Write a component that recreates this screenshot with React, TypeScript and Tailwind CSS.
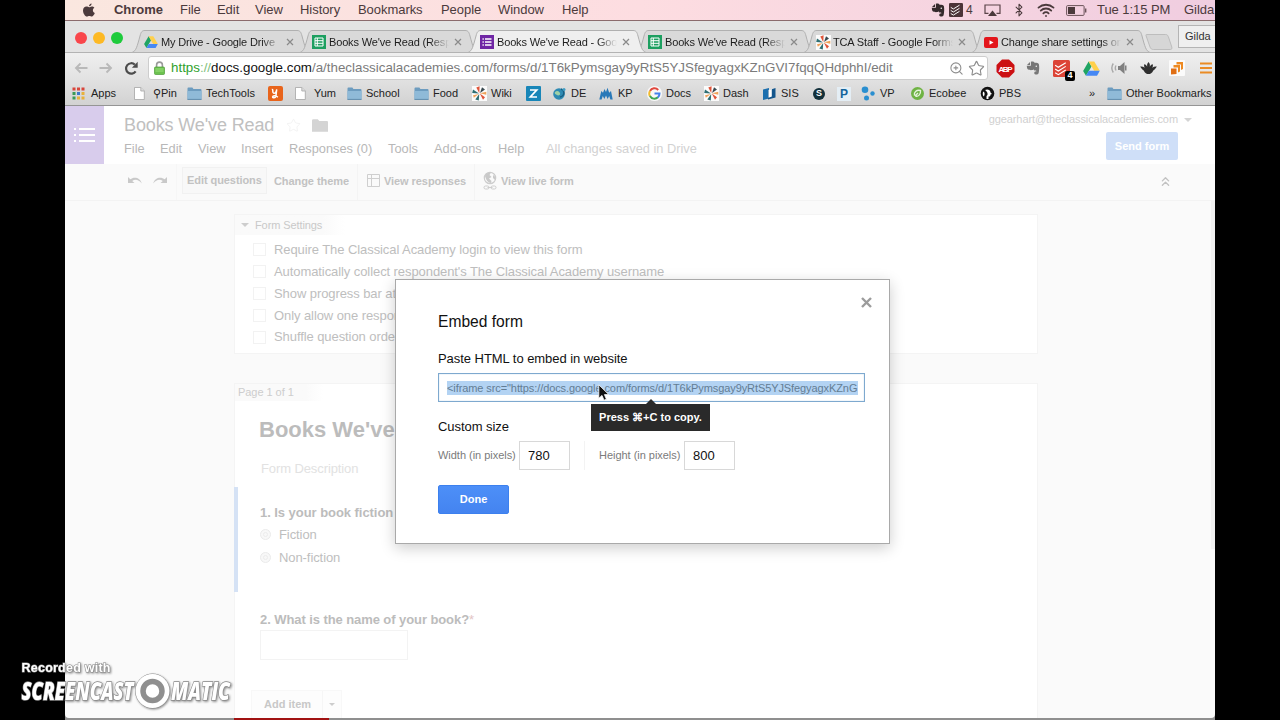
import type { ReactNode } from "react";
import { Bluetooth, ChevronsUp, Star, Wifi, ZoomIn } from "lucide-react";
import clsx from "clsx";

/* ---------- icons ---------- */

const AppleLogo = () => (
  <svg width="14" height="15" viewBox="0 0 14 15" fill="#4b3a3c">
    <path d="M9.6 0.4c.1 1.2-1.2 2.9-2.6 2.9C6.800 2 8.200.6 9.600.4zM7.100 4.200c.6 0 1.400-.8 2.700-.8 1.100 0 2 .5 2.600 1.300-2.200 1.300-1.900 4.200.4 5.200-.5 1.400-1.800 3.700-3.100 3.700-.9 0-1.300-.5-2.400-.5s-1.500.5-2.400.5C3.200 13.600 1 10.300 1 7.500 1 4.900 2.700 3.500 4.500 3.500c1.100 0 2 .7 2.600.7z" />
  </svg>
);

const Evernote = ({ color, size = 14 }: { color: string; size?: number }) => (
  <svg width={size} height={size} viewBox="0 0 14 14">
    <path fill={color} d="M1 3.900 4 1v2.900zM4.900.8C6.500.3 8 .7 8.600 1.700c2.400.1 3.900.4 4.300 1.500.5 2 .4 6.500-.3 9.100-.5 1.600-4 1.700-4.300.1-.2-1.600.6-2.300 2.300-2.200-.2-.9-1.700-.4-2.600-.9L7.600 8.300C6.500 9.700 3 9.300 1.700 8.300 1 7.500.9 5.800.8 4.700h4.100z" />
    <circle cx="10.300" cy="5.200" r=".8" fill="#eee" />
  </svg>
);

const Todoist = ({ color, size = 14 }: { color: string; size?: number }) => (
  <svg width={size} height={size} viewBox="0 0 16 16" fill="none" stroke="#fff" strokeWidth="1.100">
    <rect width="16" height="16" rx="1.500" fill={color} stroke="none" />
    <path d="m2 5 3 1.800L12 2.500M2 8.500l3 1.800L12 6M2 12l3 1.800 7-4.300" />
  </svg>
);

const Airplay = () => (
  <svg width="17" height="13" viewBox="0 0 17 13" fill="none" stroke="#5b4449" strokeWidth="1.200">
    <path d="M4.500 9.400H1V1h15v8.400h-3.500" />
    <path d="M8.500 6.500 13 12H4z" fill="#4b3a3c" stroke="none" />
  </svg>
);

const Battery = () => (
  <svg width="21" height="11" viewBox="0 0 21 11">
    <rect x=".6" y=".6" width="17.500" height="9.800" rx="1" fill="none" stroke="#6b5359" />
    <rect x="2" y="2" width="7" height="7" fill="#4b3a3c" />
    <path d="M19 3.500h1.400v4H19z" fill="#6b5359" />
  </svg>
);

const Drive = ({ size = 14 }: { size?: number }) => (
  <svg width={size} height={size} viewBox="0 0 16 16">
    <path fill="#1fa463" d="M5.300 1.500 8 6.100 2.800 14.800.1 10.300z" />
    <path fill="#ffd04b" d="M5.300 1.500h5.300l5.200 8.700h-5.300z" />
    <path fill="#4688f4" d="M5.400 10.200h10.400l-2.600 4.600H2.800z" />
  </svg>
);

const SheetIcon = ({ color }: { color: string }) => (
  <svg width="14" height="14" viewBox="0 0 14 14">
    <rect width="14" height="14" fill={color} />
    <path fill="none" stroke="#fff" d="M3 3h8v8H3zM5.300 3v8M3 5.700h8M3 8.300h8" />
  </svg>
);

const FormsIcon = () => (
  <svg width="14" height="14" viewBox="0 0 14 14">
    <rect width="14" height="14" fill="#6f26a4" />
    <path fill="none" stroke="#fff" strokeWidth="1.300" d="M2.500 4h1.300M5 4h6.500M2.500 7h1.300M5 7h6.500M2.500 10h1.300M5 10h6.500" />
  </svg>
);

const Pinwheel = () => (
  <svg width="15" height="15" viewBox="0 0 15 15">
    <rect width="15" height="15" fill="#fbfbfb" />
    <path fill="#e0553a" d="M7.300 7.200 4.300 1.600 7.600.3zM7.800 7.600l5.200 3.600-2 2.600z" />
    <path fill="#2f6f73" d="M7 7.500 1 3.600.2 6.900zM7.200 8l-.4 6.500-3.500-1z" />
    <path fill="#f0a35b" d="m7.800 7.300 6.500-1.500v3zM6.800 8l-5 3.800-.8-2.600z" />
    <path fill="#3a4a50" d="m8 7 2-5.800 3 2.200z" />
  </svg>
);

const YouTube = () => (
  <svg width="14" height="11" viewBox="0 0 14 11">
    <rect width="14" height="11" rx="2" fill="#e3151b" />
    <path fill="#fff" d="m5.500 3.200 4 2.300-4 2.300z" />
  </svg>
);

const AppsGrid = () => (
  <svg width="13" height="13" viewBox="0 0 13 13">
    <path fill="#d8453a" d="M.5.5h3v3h-3zM5 .5h3v3H5zM9.500.5h3v3h-3z" />
    <path fill="#3b9a56" d="M.5 5h3v3h-3zM.5 9.500h3v3h-3z" />
    <path fill="#3f78c9" d="M5 5h3v3H5z" />
    <path fill="#e8b13a" d="M9.500 5h3v3h-3zM5 9.500h3v3H5zM9.500 9.500h3v3h-3z" />
  </svg>
);

const PageIcon = () => (
  <svg width="11" height="13" viewBox="0 0 11 13">
    <path fill="#fff" stroke="#a5a5a5" strokeWidth=".8" d="M.5.5h6.300l3.500 3.500v8.500H.5z" />
    <path fill="#ddd" stroke="#a5a5a5" strokeWidth=".8" d="M6.800.5V4h3.500" />
  </svg>
);

const FolderIcon = () => (
  <svg width="15" height="13" viewBox="0 0 15 13">
    <path fill="#6d9cbf" d="M.5 1.500Q.5.600 1.400.6h4l1 1.400h7.200q.9 0 .9.900v9.500H.5z" />
    <path fill="#8fbad8" d="M.5 4h14v8.400H.5z" />
    <path stroke="#5683a4" strokeWidth=".8" d="M.5 12.400h14" />
  </svg>
);

const YummlyIcon = () => (
  <svg width="15" height="15" viewBox="0 0 15 15">
    <rect width="15" height="15" rx="2" fill="#e8641b" />
    <path fill="none" stroke="#fff" strokeWidth="1.500" d="M3.800 3.400c2-.3 0 3.700 2 3.900s2.600-2 2.900-4L8 9.500c-.4 3-3.500 2.800-3.400 1.300.2-1.400 3.400-1.500 5.200.4" />
  </svg>
);

const ZIcon = () => (
  <svg width="15" height="15" viewBox="0 0 15 15">
    <rect width="15" height="15" rx="1" fill="#1886b8" />
    <path fill="none" stroke="#fff" strokeWidth="1.700" d="M4 4h6.700L4.300 11H11" />
  </svg>
);

const GlobeSwirl = () => (
  <svg width="15" height="15" viewBox="0 0 15 15">
    <circle cx="7" cy="8" r="5.800" fill="#2d8ab3" />
    <path fill="#9ed0a6" d="M3 6c2-2 4-1 5 1s-2 3-3 2-3-1-2-3z" />
    <path fill="none" stroke="#195f82" strokeWidth="1.500" d="M9 3c4 1 4 7-1 8" />
    <circle cx="12" cy="3.600" r="1.500" fill="#3f9dc4" />
  </svg>
);

const KpIcon = () => (
  <svg width="14" height="13" viewBox="0 0 14 13" fill="#2a79b8">
    <path d="M.3 12.500 2.300 4 4 5.800 5.500 2l1.500 3L8.500.800l1.700 5L12 4l1.700 8.500h-2.300L10.200 9 8.600 12 7 8.500 5.400 12 3.800 9l-1.200 3.500z" />
  </svg>
);

const GoogleG = () => (
  <svg width="15" height="15" viewBox="0 0 15 15">
    <rect width="15" height="15" rx="7" fill="#f8f8f8" />
    <g fill="none" strokeWidth="2">
      <path stroke="#e0483e" d="M3 5A5 5 0 0 1 11.200 4" />
      <path stroke="#f2bb2e" d="M3 4.900a5.200 5.200 0 0 0 0 5.300" />
      <path stroke="#3da653" d="M3 10a5 5 0 0 0 7.900 1.300" />
      <path stroke="#4381ec" d="M7.500 7.500h5a5 5 0 0 1-1.700 3.900" />
    </g>
  </svg>
);

const SisIcon = () => (
  <svg width="15" height="14" viewBox="0 0 15 14">
    <path fill="#1d6fae" d="M1 2.500 7 1v10.500L1 13z" />
    <path fill="#14568c" d="M6 3.500 13.500 1v9.500L6 12.500z" />
    <path fill="#fff" d="m6.500 3 3.300-1v7.500l-3.300 1.300z" />
  </svg>
);

const VpIcon = () => (
  <svg width="15" height="15" viewBox="0 0 15 15" fill="#2a8fd0">
    <circle cx="4" cy="3.800" r="3.300" />
    <circle cx="11.500" cy="7.500" r="2.200" />
    <circle cx="5.500" cy="12" r="2.500" />
  </svg>
);

const EcobeeIcon = () => (
  <svg width="15" height="15" viewBox="0 0 15 15">
    <circle cx="7.500" cy="7.500" r="6.500" fill="#6fb344" />
    <path fill="none" stroke="#e4f2da" strokeWidth="1.400" d="M4.500 9.500c-1-3 2-6 6-5 .5 4-2.500 6.500-5 5.500M5 10l3-3" />
  </svg>
);

const PbsIcon = () => (
  <svg width="15" height="15" viewBox="0 0 15 15">
    <circle cx="7.500" cy="7.500" r="6.800" fill="#111" />
    <path fill="#fff" d="M5 4c2.500-1.400 5.500 0 5.500 2.500L12 8l-1.500.5c0 1.500-.5 2-2 2V13H6.500V10c1.800-1 1.500-4-1.500-6z" />
    <path fill="#fff" d="M3.200 5.500c1.800.7 2 3.500.3 5-.9-1.600-1-3.400-.3-5z" />
  </svg>
);

const Lock = () => (
  <svg width="11" height="14" viewBox="0 0 11 14">
    <path fill="none" stroke="#9a9a9a" strokeWidth="1.600" d="M2.600 7V4a2.900 2.900 0 0 1 5.800 0v3" />
    <rect x=".5" y="6" width="10" height="7.500" rx="1" fill="#6cc24f" stroke="#4c9c38" strokeWidth=".7" />
    <path stroke="#9be07f" d="M1.500 8h8M1.500 10h8" />
  </svg>
);

const NavArrow = ({ flip }: { flip?: boolean }) => (
  <svg width="15" height="12" viewBox="0 0 15 12" className={clsx(flip && "-scale-x-100")}>
    <path fill="none" stroke="#b9b9b9" strokeWidth="1.900" d="M13.500 6H2.500M6.500 1.500 2 6l4.500 4.500" />
  </svg>
);

const Reload = () => (
  <svg width="15" height="15" viewBox="0 0 15 15">
    <path fill="none" stroke="#4c4c4c" strokeWidth="2.200" d="M11.600 10.300A5.200 5.200 0 1 1 10.800 3.600" />
    <path fill="#4c4c4c" d="M13.700.8v5.900H7.900z" />
  </svg>
);

const SoundIcon = () => (
  <svg width="18" height="14" viewBox="0 0 18 14" fill="none" stroke="#a8a8a8" strokeWidth="1.400">
    <path fill="#808080" stroke="none" d="M8 5h2l4.500-4v12L10 9H8zM15 4.500h1.500v5H15z" />
    <path d="M6 4.500Q4.600 7 6 9.500M3.300 2.500Q.3 7 3.300 11.500" />
  </svg>
);

const Lotus = () => (
  <svg width="17" height="13" viewBox="0 0 17 13" fill="#2f2f2f">
    <path d="M8.500 0C10 1.500 10 3 9.800 4.800c.8-1.700 1.500-2.300 3-2.600.3 1.400 0 2.600-.5 3.600 1.300-1 2.700-1.400 4.500-1.200-1 2-2 3-3.500 3.800C12 11 10.500 12 8.500 12s-3.500-1-4.800-3.600C2.200 7.600 1.200 6.600.2 4.600 2 4.400 3.400 4.800 4.700 5.800 4.200 4.800 3.900 3.600 4.200 2.200c1.500.3 2.200.9 3 2.600C7 3 7 1.500 8.500 0z" />
  </svg>
);

const OrangeStack = () => (
  <svg width="16" height="16" viewBox="0 0 16 16">
    <rect width="16" height="16" rx="1" fill="#fbfbfb" />
    <path fill="#ee8a22" d="M7.500 2H14v7l-2 1V4.500H7.500z" />
    <path fill="#ee8a22" d="M4.500 5H11v6.500l-2 1v-5H4.500z" />
    <path fill="#e06f15" d="M2 8.500h5.500V14L2 14.500z" />
  </svg>
);

const Undo = ({ flip }: { flip?: boolean }) => (
  <svg width="16" height="9" viewBox="0 0 16 9" className={clsx(flip && "-scale-x-100")}>
    <path fill="#c9c9c9" d="M1 1v6h6.500L5.200 5C8 3 11.500 3.200 14.800 7.500 13.500 1.500 7 .200 3.300 3.200z" />
  </svg>
);

const GlobeLink = () => (
  <svg width="14" height="20" viewBox="0 0 14 20" fill="none" stroke="#cdcdcd">
    <circle cx="7" cy="7" r="5.700" strokeWidth="1.200" />
    <path fill="#c9c9c9" stroke="none" d="M2 5c1-3 4-4 6-3.500L6.500 4l2 2-2.500 1.500L8.500 10 8 12C5 12 3 9 2 5zM10 4l2.500 2-.5 3-2-2z" />
    <rect x="1" y="15" width="5" height="3" rx="1.500" />
    <rect x="8" y="15" width="5" height="3" rx="1.500" />
    <path d="M4.500 16.500h5" />
  </svg>
);

const Cursor = () => (
  <svg width="12" height="18" viewBox="0 0 12 18">
    <path fill="#111" stroke="#fff" strokeWidth=".8" d="M.8.8v13.500l3.200-2.900 2 4.800 2.400-1-2-4.600h4.400z" />
  </svg>
);

/* ---------- mac menu bar ---------- */

const menus = [
  { label: "File", w: "w-[37px]" },
  { label: "Edit", w: "w-[38px]" },
  { label: "View", w: "w-[45px]" },
  { label: "History", w: "w-[58px]" },
  { label: "Bookmarks", w: "w-[83px]" },
  { label: "People", w: "w-[57px]" },
  { label: "Window", w: "w-[64px]" },
  { label: "Help", w: "w-[60px]" },
];

function MenuBar() {
  return (
    <div className="flex h-[21px] shrink-0 items-center border-b border-[#8b6b6d] bg-gradient-to-r from-[#fae7df] via-[#fddde1] to-[#f0cde0] pl-[17px] text-[13px] tracking-[-0.05px] text-[#4b3a3c]">
      <div className="w-[32px]"><AppleLogo /></div>
      <div className="w-[66px] font-bold">Chrome</div>
      {menus.map((m) => (
        <div key={m.label} className={m.w}>{m.label}</div>
      ))}
      <div className="ml-auto flex h-full items-center">
        <div className="w-[18px]"><Evernote color="#35292b" /></div>
        <div className="w-[17px]"><Todoist color="#4b3337" /></div>
        <div className="w-[18px] text-[12px]">4</div>
        <div className="w-[28px]"><Airplay /></div>
        <div className="w-[25px]"><Bluetooth size={14} strokeWidth={1.800} /></div>
        <div className="w-[29px]"><Wifi size={18} strokeWidth={2.400} /></div>
        <div className="w-[31px]"><Battery /></div>
        <div className="w-[87px] whitespace-nowrap">Tue 1:15 PM</div>
        <div className="w-[31px] overflow-hidden font-medium">Gilda</div>
      </div>
    </div>
  );
}

/* ---------- browser chrome ---------- */

function Tab({ icon, title, active }: { icon: ReactNode; title: string; active?: boolean }) {
  return (
    <div className={clsx("-mr-3 grid h-[22px] w-[180px] shrink-0", active && "z-10")}>
      <svg width="180" height="22" viewBox="0 0 180 22" className="col-start-1 row-start-1">
        <path
          d="M.5 22C4 21 5 17 8 6 9 2 10 .500 13 .500h152c3 0 4 1.500 5 5.500 3 11 4 15 7.500 16"
          fill={active ? "#efefef" : "#d9d9d9"}
          stroke="#b0b0b0"
        />
      </svg>
      <div className="col-start-1 row-start-1 flex items-center pl-[12px] pt-[2px]">
        <div className="flex w-[17px] items-center">{icon}</div>
        <div className="w-[120px] overflow-hidden whitespace-nowrap text-[11px] tracking-[-0.15px] text-[#1d1d1d] [mask-image:linear-gradient(to_right,black_84%,transparent)]">
          {title}
        </div>
        <svg width="8" height="8" viewBox="0 0 8 8" className="ml-[5px]" stroke="#8a8a8a" strokeWidth="1.200">
          <path d="m1 1 6 6M7 1 1 7" />
        </svg>
      </div>
    </div>
  );
}

function TabStrip() {
  return (
    <div className="flex h-[32px] shrink-0 items-end border-b border-[#b3b3b3] bg-[#e3e3e3]">
      <div className="flex h-[29px] w-[67px] shrink-0 items-center gap-[6px] pl-[10px]">
        <span className="size-[12px] rounded-full bg-[#f9464b]" />
        <span className="size-[12px] rounded-full bg-[#fdb924]" />
        <span className="size-[12px] rounded-full bg-[#1ecb3c]" />
      </div>
      <Tab icon={<Drive />} title="My Drive - Google Drive" />
      <Tab icon={<SheetIcon color="#1d9f60" />} title="Books We've Read (Resp" />
      <Tab icon={<FormsIcon />} title="Books We've Read - Goog" active />
      <Tab icon={<SheetIcon color="#1d9f60" />} title="Books We've Read (Resp" />
      <Tab icon={<Pinwheel />} title="TCA Staff - Google Forms" />
      <Tab icon={<YouTube />} title="Change share settings on" />
      <svg width="28" height="16" viewBox="0 0 28 16" className="mb-[2px] ml-[5px] shrink-0">
        <path d="M1.500.5h19c2 0 2.500 1 3.300 3.500l3 9c.4 1.500 0 2.500-1.500 2.500H8.500c-2 0-3-1-3.500-2.500L1.500 3C1 1.500.5.500 1.500.500z" fill="#d6d6d6" stroke="#bdbdbd" />
      </svg>
      <div className="mb-[4px] ml-auto flex h-[23px] w-[37px] shrink-0 items-center overflow-hidden border border-r-0 border-[#b4b4b4] bg-[#efefef] pl-[6px] text-[11px] text-[#333]">
        Gilda
      </div>
    </div>
  );
}

function AddressRow() {
  return (
    <div className="flex h-[27px] shrink-0 items-center bg-gradient-to-b from-[#efefef] to-[#e2e2e2] pl-[9px] pt-[3px]">
      <div className="w-[24px]"><NavArrow /></div>
      <div className="w-[26px]"><NavArrow flip /></div>
      <div className="w-[24px]"><Reload /></div>
      <div className="flex h-[24px] w-[840px] shrink-0 items-center rounded-[3px] border border-[#cdcdcd] bg-white pl-[5px]">
        <div className="w-[17px]"><Lock /></div>
        <div className="w-[778px] whitespace-nowrap pt-px text-[13.350px] text-[#7b7b7b]">
          <span className="text-[#2fa12c]">https</span>
          <span className="text-[#7fc17d]">://</span>
          <span className="text-[#111]">docs.google.com</span>
          /a/theclassicalacademies.com/forms/d/1T6kPymsgay9yRtS5YJSfegyagxKZnGVI7fqqQHdphhI/edit
        </div>
        <ZoomIn size={15} strokeWidth={1.700} color="#8c8c8c" />
        <Star size={17} strokeWidth={1.600} color="#8c8c8c" className="ml-[4px]" />
      </div>
      <div className="ml-[8px] flex h-full items-center">
        <div className="w-[30px]">
          <svg width="19" height="19" viewBox="0 0 19 19">
            <path fill="#cc1013" d="M6 .500h7L18.500 6v7L13 18.500H6L.500 13V6z" />
            <text x="9.500" y="12.500" textAnchor="middle" fontSize="8" fontWeight="bold" fill="#fff" textLength="14">ABP</text>
          </svg>
        </div>
        <div className="w-[27px]"><Evernote color="#777" size={14} /></div>
        <div className="relative w-[30px]">
          <Todoist color="#dc4437" size={17} />
          <span className="absolute left-[12px] top-[11px] flex h-[10px] w-[10px] items-center justify-center rounded-[2px] bg-black text-[9px] font-bold text-white">4</span>
        </div>
        <div className="w-[27px]"><Drive size={17} /></div>
        <div className="w-[30px]"><SoundIcon /></div>
        <div className="w-[29px]"><Lotus /></div>
        <div className="w-[31px]"><OrangeStack /></div>
        <svg width="12" height="12" viewBox="0 0 12 12" stroke="#ea8b25" strokeWidth="2.200">
          <path d="M0 1.500h12M0 6h12M0 10.500h12" />
        </svg>
      </div>
    </div>
  );
}

const bookmarks: { w: string; icon?: ReactNode; label?: string }[] = [
  { w: "w-[62px]", icon: <AppsGrid />, label: "Apps" },
  { w: "w-[53px]", icon: <PageIcon />, label: "⚲Pin" },
  { w: "w-[81px]", icon: <FolderIcon />, label: "TechTools" },
  { w: "w-[27px]", icon: <YummlyIcon /> },
  { w: "w-[52px]", icon: <PageIcon />, label: "Yum" },
  { w: "w-[67px]", icon: <FolderIcon />, label: "School" },
  { w: "w-[58px]", icon: <FolderIcon />, label: "Food" },
  { w: "w-[54px]", icon: <Pinwheel />, label: "Wiki" },
  { w: "w-[26px]", icon: <ZIcon /> },
  { w: "w-[47px]", icon: <GlobeSwirl />, label: "DE" },
  { w: "w-[48px]", icon: <KpIcon />, label: "KP" },
  { w: "w-[57px]", icon: <GoogleG />, label: "Docs" },
  { w: "w-[58px]", icon: <Pinwheel />, label: "Dash" },
  { w: "w-[51px]", icon: <SisIcon />, label: "SIS" },
  {
    w: "w-[24px]",
    icon: <span className="flex size-[12px] items-center justify-center rounded-full bg-[#12303a] text-[9px] font-bold text-white">S</span>,
  },
  {
    w: "w-[24px]",
    icon: <span className="flex size-[14px] items-center justify-center bg-[#e4eef5] text-[12px] font-bold text-[#12639b]">P</span>,
  },
  { w: "w-[49px]", icon: <VpIcon />, label: "VP" },
  { w: "w-[70px]", icon: <EcobeeIcon />, label: "Ecobee" },
  { w: "w-[109px]", icon: <PbsIcon />, label: "PBS" },
  { w: "w-[18px]", icon: <span>»</span> },
  { w: "w-[105px]", icon: <FolderIcon />, label: "Other Bookmarks" },
];

function BookmarksBar() {
  return (
    <div className="flex h-[26px] shrink-0 items-center overflow-hidden border-b border-[#959595] bg-gradient-to-b from-[#e1e1e1] to-[#d2d2d2] pl-[7px] pt-[2px] text-[11px] text-[#222]">
      {bookmarks.map((b, i) => (
        <div key={i} className={clsx("flex shrink-0 items-center gap-[4px] whitespace-nowrap", b.w)}>
          <div className="flex w-[15px] shrink-0 items-center">{b.icon}</div>
          {b.label}
        </div>
      ))}
    </div>
  );
}

/* ---------- form editor ---------- */

const docMenus = [
  { label: "File", w: "w-[36px]" },
  { label: "Edit", w: "w-[38px]" },
  { label: "View", w: "w-[43px]" },
  { label: "Insert", w: "w-[48px]" },
  { label: "Responses (0)", w: "w-[99px]" },
  { label: "Tools", w: "w-[46px]" },
  { label: "Add-ons", w: "w-[64px]" },
  { label: "Help", w: "w-[48px]" },
];

function EditorHeader() {
  return (
    <div className="flex h-[58px] shrink-0 bg-white">
      <div className="flex w-[39px] items-center justify-center bg-[#d8ccec]">
        <svg width="21" height="16" viewBox="0 0 21 16" stroke="#fff" strokeWidth="1.800">
          <path d="M0 2h2M5 2h16M0 8h2M5 8h16M0 14h2M5 14h16" />
        </svg>
      </div>
      <div className="flex flex-col pl-[20px]">
        <div className="flex h-[36px] items-center pt-[3px]">
          <div className="w-[162px] text-[18px] tracking-[-0.120px] text-[#c0c0c0]">Books We've Read</div>
          <div className="w-[26px]"><Star size={15} strokeWidth={1.300} color="#f0f0f0" /></div>
          <svg width="16" height="13" viewBox="0 0 16 13" fill="#d4d4d4">
            <path d="M0 1.500Q0 .3 1.200.3h4.600L7.300 2H15q1 0 1 1v9.700H0z" />
          </svg>
        </div>
        <div className="flex h-[14px] items-center text-[12.800px] text-[#b8b8b8]">
          {docMenus.map((m) => (
            <div key={m.label} className={clsx("whitespace-nowrap", m.w)}>{m.label}</div>
          ))}
          <div className="whitespace-nowrap text-[#d2d2d2]">All changes saved in Drive</div>
        </div>
      </div>
      <div className="ml-auto flex flex-col pr-[23px]">
        <div className="flex h-[26px] items-center justify-end pt-px text-[11px] tracking-[-0.080px] text-[#d0d0d0]">
          ggearhart@theclassicalacademies.com
          <span className="ml-[6px] border-x-[4px] border-t-[4px] border-x-transparent border-t-[#d4d4d4]" />
        </div>
        <div className="mr-[14px] flex h-[28px] w-[72px] items-center justify-center self-end rounded-[2px] bg-[#cfdff8] text-[11px] font-bold text-white">
          Send form
        </div>
      </div>
    </div>
  );
}

function EditorToolbar() {
  return (
    <div className="flex h-[37px] shrink-0 items-center border-b border-[#f3f3f3] bg-[#fafafa] pl-[62px] text-[11px] font-bold tracking-[-0.070px] text-[#c2c2c2]">
      <div className="w-[25px] pb-[3px]"><Undo /></div>
      <div className="w-[24px] pb-[3px]"><Undo flip /></div>
      <div className="h-full w-[6px] border-l border-[#f6f6f6]" />
      <div className="mb-[3px] flex h-[27px] w-[85px] items-center border border-[#f1f1f1] bg-[#f8f8f8] pl-[4px]">Edit questions</div>
      <div className="w-[90px] pb-[2px] pl-[7px]">Change theme</div>
      <div className="h-full w-[10px] border-l border-[#f4f4f4]" />
      <div className="w-[17px] pb-[3px]">
        <svg width="13" height="13" viewBox="0 0 13 13" fill="none" stroke="#cfcfcf">
          <path d="M.5.5h12v12H.5zM4.500.5v12M.5 4.500h12" />
        </svg>
      </div>
      <div className="w-[90px] pb-[2px]">View responses</div>
      <div className="h-full w-[9px] border-l border-[#f4f4f4]" />
      <div className="w-[18px] pb-[2px]"><GlobeLink /></div>
      <div className="pb-[2px]">View live form</div>
      <ChevronsUp size={15} strokeWidth={2.200} className="mb-[2px] ml-auto mr-[42px]" />
    </div>
  );
}

const settings = [
  "Require The Classical Academy login to view this form",
  "Automatically collect respondent's The Classical Academy username",
  "Show progress bar at the bottom",
  "Only allow one response",
  "Shuffle question order",
];

function FormSettings() {
  return (
    <div className="h-[140px] w-[804px] shrink-0 border border-[#f4f4f4] bg-white">
      <div className="flex h-[20px] w-[110px] items-center bg-gradient-to-r from-[#fafafa] from-80% to-white pl-[6px] text-[11px] text-[#c9c9c9]">
        <span className="border-x-[4px] border-t-[4px] border-x-transparent border-t-[#cdcdcd]" />
        <span className="ml-[6px] tracking-[-0.100px]">Form Settings</span>
      </div>
      <div className="flex flex-col pl-[18px] pt-[4px] text-[13px] tracking-[-0.080px] text-[#bebebe]">
        {settings.map((s) => (
          <div key={s} className="flex h-[21.800px] items-center">
            <span className="mr-[8px] size-[13px] border border-[#f2f2f2]" />
            {s}
          </div>
        ))}
      </div>
    </div>
  );
}

function RadioRow({ label }: { label: string }) {
  return (
    <div className="flex h-[23px] items-center text-[13px] tracking-[-0.080px] text-[#bebebe]">
      <span className="mr-[8px] flex size-[11px] items-center justify-center rounded-full border border-[#ebebeb] bg-[#f8f8f8]">
        <span className="size-[5px] rounded-full border border-[#ececec]" />
      </span>
      {label}
    </div>
  );
}

function FormPage() {
  return (
    <div className="mt-[29px] flex h-[336px] w-[804px] shrink-0 flex-col border border-b-0 border-[#f4f4f4] bg-white">
      <div className="h-[17px] w-[88px] bg-gradient-to-r from-[#fafafa] from-80% to-white pl-[3px] text-[11px] leading-[17px] tracking-[-0.050px] text-[#cdcdcd]">Page 1 of 1</div>
      <div className="h-[56px] pl-[24px] text-[22px] font-bold leading-[58px] text-[#bcbcbc]">Books We've Read</div>
      <div className="h-[30px] pl-[26px] text-[13px] leading-[24px] tracking-[-0.100px] text-[#e2e2e2]">Form Description</div>
      <div className="ml-[-1px] flex h-[105px] flex-col border-l-4 border-[#d5e2f5] pl-[22px] pt-[15px]">
        <div className="h-[21px] text-[13px] font-bold leading-[22px] tracking-[-0.050px] text-[#bcbcbc]">1. Is your book fiction or non-fiction?</div>
        <RadioRow label="Fiction" />
        <RadioRow label="Non-fiction" />
      </div>
      <div className="flex h-[38px] items-end pb-px pl-[25px] text-[13px] font-bold tracking-[-0.080px] text-[#bcbcbc]">
        2. What is the name of your book?<span className="font-normal text-[#e3c4c4]">*</span>
      </div>
      <div className="ml-[25px] h-[30px] w-[148px] border border-[#f3f3f3]" />
      <div className="ml-[16px] mt-[30px] flex h-[29px] w-[91px] items-center border border-[#f8f8f8] bg-[#fdfdfd] pl-[12px] text-[11px] font-bold text-[#c8c8c8]">
        Add item
        <span className="ml-auto flex h-full w-[19px] items-center justify-center border-l border-[#f6f6f6]">
          <span className="border-x-[3px] border-t-[3px] border-x-transparent border-t-[#cdcdcd]" />
        </span>
      </div>
    </div>
  );
}

function EmbedDialog() {
  return (
    <div className="absolute left-[330px] top-[173px] flex h-[265px] w-[495px] flex-col border border-[#a9a9a9] bg-white pl-[42px] shadow-[0_4px_14px_rgba(0,0,0,0.2)]">
      <svg width="11" height="11" viewBox="0 0 11 11" className="absolute right-[17px] top-[17px]" stroke="#9c9c9c" strokeWidth="2.400">
        <path d="m1 1 9 9M10 1 1 10" />
      </svg>
      <div className="mt-[30px] h-[24px] text-[15.600px] leading-[24px] text-[#111]">Embed form</div>
      <div className="mt-[15px] h-[20px] text-[13px] leading-[20px] tracking-[-0.050px] text-[#111]">Paste HTML to embed in website</div>
      <div className="mt-[4px] flex h-[29px] w-[427px] items-center border border-[#7ea9cf] pl-[8px] shadow-[inset_0_0_1px_#7ea9cf]">
        <span className="w-[411px] overflow-hidden whitespace-nowrap bg-[#b3d3f3] text-[11px] leading-[14px] tracking-[-0.090px] text-[#637d94]">
          {'<iframe src="https://docs.google.com/forms/d/1T6kPymsgay9yRtS5YJSfegyagxKZnG'}
        </span>
      </div>
      <div className="mt-[15px] h-[20px] text-[13px] leading-[20px] tracking-[-0.050px] text-[#111]">Custom size</div>
      <div className="mt-[4px] flex h-[29px] items-center text-[11px] tracking-[-0.030px] text-[#7b7b7b]">
        <span className="w-[81px]">Width (in pixels)</span>
        <span className="flex h-full w-[51px] items-center border border-[#d8d8d8] pl-[8px] text-[13px] text-[#111]">780</span>
        <span className="ml-[14px] h-full w-[15px] border-l border-[#f3f3f3]" />
        <span className="w-[85px]">Height (in pixels)</span>
        <span className="flex h-full w-[51px] items-center border border-[#d8d8d8] pl-[8px] text-[13px] text-[#111]">800</span>
      </div>
      <button className="mt-[15px] h-[29px] w-[71px] rounded-[2px] border border-[#3c80ee] bg-gradient-to-b from-[#4d8ff8] to-[#4484f0] pb-px text-[11px] font-bold text-white">Done</button>
      <div className="absolute left-[195px] top-[119px] flex flex-col items-center">
        <span className="border-x-[5px] border-b-[5px] border-x-transparent border-b-[#2a2a2a]" />
        <span className="flex h-[27px] w-[119px] items-center justify-center whitespace-nowrap bg-[#2a2a2a] text-[11px] font-bold text-white">
          Press ⌘+C to copy.
        </span>
      </div>
      <div className="absolute left-[202px] top-[104px]"><Cursor /></div>
    </div>
  );
}

function Watermark() {
  return (
    <svg width="230" height="60" viewBox="0 0 230 60" className="absolute left-[14px] top-[656px] [filter:drop-shadow(1px_1px_1px_rgba(0,0,0,0.45))]">
      <g fill="#fff" stroke="#8a8a8a" strokeWidth="1.400" paintOrder="stroke">
        <text x="7.500" y="16" fontSize="12.500" textLength="89" fontFamily="Liberation Sans" strokeWidth="1" fontWeight="bold">Recorded with</text>
        <g fontFamily="Open Sans" fontWeight="800" fontStyle="italic" fontSize="24">
          <text x="7.500" y="43.500" textLength="112" lengthAdjust="spacingAndGlyphs">SCREENCAST</text>
          <text x="157" y="43.500" textLength="59" lengthAdjust="spacingAndGlyphs">MATIC</text>
        </g>
        <circle cx="138.500" cy="35" r="17" strokeWidth="1" />
      </g>
      <circle cx="138.500" cy="35" r="9.500" fill="none" stroke="#8f8f8f" strokeWidth="5.500" />
    </svg>
  );
}

export default function App() {
  return (
    <div className="relative flex h-[720px] w-[1280px] justify-center overflow-hidden bg-black font-['Liberation_Sans',Arial,sans-serif]">
      <div className="flex h-[720px] w-[1150px] flex-col overflow-hidden bg-[#8f8f8f]">
        <MenuBar />
        <TabStrip />
        <AddressRow />
        <BookmarksBar />
        <div className="relative flex h-[612px] shrink-0 flex-col overflow-hidden rounded-b-[4px] bg-[#fafafa]">
          <EditorHeader />
          <EditorToolbar />
          <div className="flex grow overflow-hidden">
            <div className="flex grow flex-col pl-[169px] pt-[13px]">
              <FormSettings />
              <FormPage />
            </div>
            <div className="h-[348px] w-[4px] shrink-0 bg-[#f1f1f1]" />
          </div>
          <EmbedDialog />
        </div>
        <div className="ml-[169px] h-[2px] w-[95px] bg-[#a11212]" />
      </div>
      <Watermark />
    </div>
  );
}
